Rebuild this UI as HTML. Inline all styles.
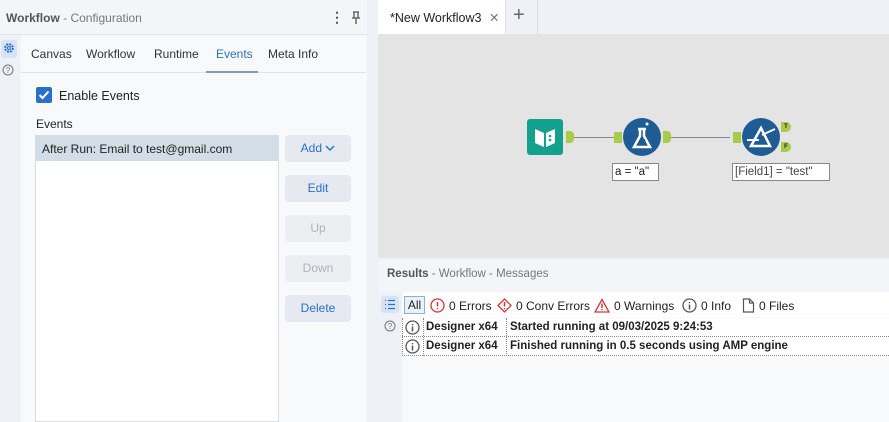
<!DOCTYPE html>
<html><head><style>
*{margin:0;padding:0;box-sizing:border-box}
body{width:889px;height:422px;overflow:hidden;background:#f4f6f9;font-family:"Liberation Sans",sans-serif;font-size:12px;color:#222;position:relative}
.a{position:absolute}
.btn{position:absolute;left:285px;width:66px;height:27px;background:#e6eaf0;border-radius:4px;color:#2a6fc9;text-align:center;line-height:27px;font-size:12px}
.dis{color:#b0b4ba;background:#eceef1}
.tab{position:absolute;top:47px;font-size:12px;color:#333}
.row{position:absolute;left:402px;width:487px;height:19px;border-bottom:1px dotted #888;font-weight:bold;font-size:11.5px;line-height:19px}
.tb{position:absolute;top:298px;font-size:12px;display:flex;align-items:center;gap:4px}
.tb svg{display:block}
</style></head><body>
<div class="a" style="left:0;top:0;width:373px;height:35px;background:#f3f5f8;border-bottom:1px solid #dfe3ea"></div>
<div class="a" style="left:6px;top:11px;font-weight:bold;color:#555">Workflow <span style="font-weight:normal;color:#777">- Configuration</span></div>
<div class="a" style="left:330px;top:9px;color:#555;font-size:14px;font-weight:bold">⋮</div>
<svg class="a" style="left:350px;top:11px" width="12" height="14"><path d="M3 1h6M4 1v6M8 1v6M2 7h8M6 7v6" stroke="#555" stroke-width="1.3" fill="none"/></svg>
<div class="a" style="left:0;top:36px;width:20px;height:386px;background:#eef1f5"></div>
<div class="a" style="left:1px;top:40px;width:16px;height:18px;background:#d6e4f5;border-radius:3px"></div>
<svg class="a" style="left:3px;top:42px" width="12" height="12"><circle cx="6" cy="6" r="3.8" fill="none" stroke="#2a6fc9" stroke-width="2" stroke-dasharray="2 1"/><circle cx="6" cy="6" r="1.5" fill="none" stroke="#2a6fc9"/></svg>
<svg class="a" style="left:2px;top:64px" width="12" height="12"><circle cx="6" cy="6" r="5" fill="none" stroke="#777"/><text x="6" y="9" font-size="8" text-anchor="middle" fill="#777" font-family="Liberation Sans">?</text></svg>
<div class="a" style="left:21px;top:36px;width:346px;height:386px;background:#f7f9fb"></div>
<div class="tab" style="left:31px">Canvas</div>
<div class="tab" style="left:86px">Workflow</div>
<div class="tab" style="left:154px">Runtime</div>
<div class="tab" style="left:216px;color:#2a6fc9">Events</div>
<div class="tab" style="left:268px">Meta Info</div>
<div class="a" style="left:21px;top:72px;width:345px;height:1px;background:#dde2e9"></div>
<div class="a" style="left:206px;top:71px;width:52px;height:2px;background:#8a9cb5"></div>
<div class="a" style="left:36px;top:87px;width:16px;height:16px;background:#2a6fc9;border-radius:2px"></div>
<svg class="a" style="left:36px;top:87px" width="16" height="16"><path d="M3.5 8l3 3 6-6.5" stroke="#fff" stroke-width="2" fill="none"/></svg>
<div class="a" style="left:59px;top:89px;font-size:12.5px">Enable Events</div>
<div class="a" style="left:36px;top:117px">Events</div>
<div class="a" style="left:35px;top:135px;width:244px;height:287px;background:#fff;border:1px solid #d8dde4"></div>
<div class="a" style="left:36px;top:136px;width:242px;height:25px;background:#d3dde8"></div>
<div class="a" style="left:42px;top:142px">After Run: Email to test@gmail.com</div>
<div class="btn" style="top:135px">Add <svg width="10" height="7"><path d="M1 1l4 4 4-4" stroke="#2a6fc9" stroke-width="1.4" fill="none"/></svg></div>
<div class="btn" style="top:175px">Edit</div>
<div class="btn dis" style="top:215px">Up</div>
<div class="btn dis" style="top:255px">Down</div>
<div class="btn" style="top:295px">Delete</div>
<div class="a" style="left:367px;top:0;width:11px;height:422px;background:#eef1f5"></div>
<div class="a" style="left:378px;top:0;width:511px;height:34px;background:#eef1f5"></div>
<div class="a" style="left:378px;top:0;width:127px;height:34px;background:#fff"></div>
<div class="a" style="left:390px;top:10px;font-size:12.5px">*New Workflow3 <span style="color:#777;margin-left:4px">✕</span></div>
<div class="a" style="left:513px;top:4px;font-size:20px;color:#666">+</div>
<div class="a" style="left:505px;top:0;width:1px;height:34px;background:#dde"></div>
<div class="a" style="left:537px;top:0;width:1px;height:34px;background:#dde"></div>
<div class="a" style="left:378px;top:34px;width:511px;height:223px;background:#e4e4e4"></div>
<div class="a" style="left:572px;top:137px;width:50px;height:1px;background:#888"></div>
<div class="a" style="left:668px;top:137px;width:62px;height:1px;background:#888"></div>
<div class="a" style="left:527px;top:119px;width:36px;height:36px;background:#13a08c;border-radius:3px"></div>
<svg class="a" style="left:527px;top:119px" width="36" height="36"><path d="M8 10l9 4v14l-9-4zM28 10l-9 4v14l9-4z" fill="#fff"/><circle cx="23" cy="17" r="1.3" fill="#13a08c"/><circle cx="23" cy="21" r="1.3" fill="#13a08c"/></svg>
<div class="a" style="left:566px;top:131px;width:8px;height:12px;background:#a8cc4a;border-radius:0 4px 4px 0"></div>
<div class="a" style="left:614px;top:132px;width:8px;height:11px;background:#a8cc4a"></div>
<div class="a" style="left:623px;top:118px;width:38px;height:38px;background:#1f5c96;border-radius:50%"></div>
<svg class="a" style="left:623px;top:118px" width="38" height="38"><path d="M15 11h8M17 11v7l-6 11h16l-6-11v-7" stroke="#fff" stroke-width="2.5" fill="none"/><circle cx="20" cy="23" r="2" fill="none" stroke="#1f5c96"/><circle cx="24" cy="6" r="1.5" fill="#fff"/></svg>
<div class="a" style="left:663px;top:131px;width:8px;height:12px;background:#a8cc4a;border-radius:0 4px 4px 0"></div>
<div class="a" style="left:733px;top:132px;width:8px;height:11px;background:#a8cc4a"></div>
<div class="a" style="left:742px;top:118px;width:38px;height:38px;background:#1f5c96;border-radius:50%"></div>
<svg class="a" style="left:742px;top:118px" width="38" height="38"><path d="M9 28L19 10l9 18z" stroke="#fff" stroke-width="2.5" fill="none"/><path d="M5 22h12M20 17l13-6" stroke="#fff" stroke-width="2"/></svg>
<div class="a" style="left:781px;top:122px;width:10px;height:10px;background:#a8cc4a;border-radius:0 5px 5px 0;font-size:6px;font-weight:bold;line-height:10px;text-align:center">T</div>
<div class="a" style="left:781px;top:142px;width:10px;height:10px;background:#a8cc4a;border-radius:0 5px 5px 0;font-size:6px;font-weight:bold;line-height:10px;text-align:center">F</div>
<div class="a" style="left:612px;top:163px;width:47px;height:18px;background:#fff;border:1px solid #888;font-size:11.5px;line-height:16px;padding-left:2px">a = "a"</div>
<div class="a" style="left:732px;top:163px;width:98px;height:18px;background:#fff;border:1px solid #888;font-size:11.5px;line-height:16px;padding-left:2px;color:#444">[Field1] = "test"</div>
<div class="a" style="left:378px;top:257px;width:511px;height:35px;background:#f3f5f8;border-top:2px solid #e8ebef"></div>
<div class="a" style="left:387px;top:268px;font-size:11.5px;font-weight:bold;color:#555">Results <span style="font-weight:normal;color:#777">- Workflow - Messages</span></div>
<div class="a" style="left:378px;top:292px;width:24px;height:130px;background:#eef1f5"></div>
<div class="a" style="left:381px;top:296px;width:18px;height:17px;background:#d6e4f5;border-radius:3px"></div>
<svg class="a" style="left:384px;top:299px" width="12" height="11"><path d="M4 1.5h7M4 5.5h7M4 9.5h7M1 1.5h1M1 5.5h1M1 9.5h1" stroke="#2a6fc9" stroke-width="1.3"/></svg>
<svg class="a" style="left:384px;top:320px" width="12" height="12"><circle cx="6" cy="6" r="5" fill="none" stroke="#777"/><text x="6" y="9" font-size="8" text-anchor="middle" fill="#777" font-family="Liberation Sans">?</text></svg>
<div class="a" style="left:402px;top:292px;width:487px;height:130px;background:#f7f9fb"></div>
<div class="a" style="left:402px;top:293px;width:487px;height:24px;background:#fff"></div>
<div class="a" style="left:404px;top:296px;width:21px;height:18px;border:1px solid #8ab0e0;background:#eaf1fb;text-align:center;line-height:16px">All</div>
<div class="tb" style="left:430px"><svg width="15" height="15"><circle cx="7.5" cy="7.5" r="6.5" fill="none" stroke="#d33" stroke-width="1.3"/><path d="M7.5 4v4.5M7.5 10v1.2" stroke="#d33" stroke-width="1.5"/></svg>0 Errors</div>
<div class="tb" style="left:497px"><svg width="15" height="15"><path d="M7.5 1l6.5 6.5-6.5 6.5L1 7.5z" fill="none" stroke="#d33" stroke-width="1.3"/><path d="M7.5 4v4.5M7.5 10v1.2" stroke="#d33" stroke-width="1.5"/></svg>0 Conv Errors</div>
<div class="tb" style="left:594px"><svg width="16" height="15"><path d="M8 1.5l7 12.5H1z" fill="none" stroke="#d33" stroke-width="1.3"/><path d="M8 5.5v4.5M8 11v1.2" stroke="#d33" stroke-width="1.5"/></svg>0 Warnings</div>
<div class="tb" style="left:682px"><svg width="15" height="15"><circle cx="7.5" cy="7.5" r="6.5" fill="none" stroke="#555" stroke-width="1.3"/><path d="M7.5 6.5v5M7.5 4v1.2" stroke="#555" stroke-width="1.5"/></svg>0 Info</div>
<div class="tb" style="left:742px"><svg width="13" height="15"><path d="M1.5 1h6l4 4v9h-10z M7.5 1v4h4" fill="none" stroke="#555" stroke-width="1.2"/></svg>0 Files</div>
<div class="row" style="top:318px;background:#fff"><svg style="position:absolute;left:3px;top:2px" width="15" height="15"><circle cx="7.5" cy="7.5" r="6.5" fill="none" stroke="#555" stroke-width="1.3"/><path d="M7.5 6.5v5M7.5 4v1.2" stroke="#555" stroke-width="1.5"/></svg><span style="position:absolute;left:24px">Designer x64</span><span style="position:absolute;left:108px">Started running at 09/03/2025 9:24:53</span></div>
<div class="row" style="top:337px;background:#fff"><svg style="position:absolute;left:3px;top:2px" width="15" height="15"><circle cx="7.5" cy="7.5" r="6.5" fill="none" stroke="#555" stroke-width="1.3"/><path d="M7.5 6.5v5M7.5 4v1.2" stroke="#555" stroke-width="1.5"/></svg><span style="position:absolute;left:24px">Designer x64</span><span style="position:absolute;left:108px">Finished running in 0.5 seconds using AMP engine</span></div>
<div class="a" style="left:402px;top:318px;width:1px;height:38px;border-left:1px dotted #888"></div>
<div class="a" style="left:423px;top:318px;width:1px;height:38px;border-left:1px dotted #888"></div>
<div class="a" style="left:506px;top:318px;width:1px;height:38px;border-left:1px dotted #888"></div>
</body></html>
